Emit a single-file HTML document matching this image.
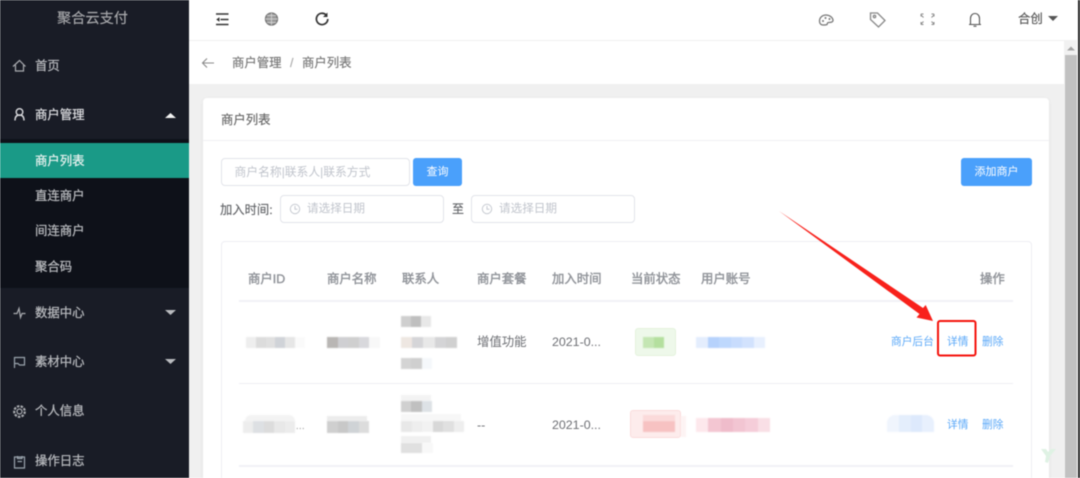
<!DOCTYPE html>
<html lang="zh"><head><meta charset="utf-8"><title>聚合云支付</title>
<style>
html,body{margin:0;padding:0;width:1080px;height:478px;overflow:hidden;background:#fff}
#r{position:relative;width:1080px;height:478px;overflow:hidden;background:#f0f0f0;font-family:"Liberation Sans","Noto Sans CJK SC",sans-serif;filter:blur(.4px)}
#r div,#r svg{position:absolute}
.t{line-height:20px;height:20px;white-space:nowrap;font-size:12.4px;-webkit-text-stroke:.15px currentColor}
.s{color:#b9bbbf;-webkit-text-stroke:.25px currentColor}
.h{color:#909399;font-size:12.4px;-webkit-text-stroke:.4px currentColor}
.c{color:#6c6e73;font-size:12.4px;-webkit-text-stroke:0}
.a{color:#5aa8f8;font-size:10.7px;-webkit-text-stroke:0}
.ph{color:#c0c4cc;font-size:12px;-webkit-text-stroke:0}
.in{background:#fff;border:1px solid #e2e4ea;border-radius:4px;box-sizing:border-box}
.btn{background:#4aa0fb;border-radius:3px;color:#fff;font-size:11px;text-align:center;-webkit-text-stroke:0}
.m{display:flex;filter:blur(.5px)}
.m i{display:block;flex:1}
.ln{left:239px;width:774px;background:#f1f1f6}
</style></head><body><div id="r">

<!-- sidebar -->
<div style="left:0;top:0;width:189px;height:478px;background:#191c26"></div>
<div style="left:0;top:139px;width:189px;height:149px;background:#0e1119"></div>
<div style="left:0;top:143px;width:189px;height:35px;background:#1a9a87"></div>
<div class="t" style="left:57px;top:9px;font-size:14.200px;color:#a8a9ac">聚合云支付</div>
<div class="t s" style="left:35px;top:55.500px">首页</div>
<div class="t s" style="left:35px;top:104.500px;color:#dcdde0">商户管理</div>
<div class="t" style="left:35px;top:151px;color:#e8f2ef;-webkit-text-stroke:.25px currentColor">商户列表</div>
<div class="t s" style="left:35px;top:186px">直连商户</div>
<div class="t s" style="left:35px;top:221px">间连商户</div>
<div class="t s" style="left:35px;top:257px">聚合码</div>
<div class="t s" style="left:35px;top:303px">数据中心</div>
<div class="t s" style="left:35px;top:352px">素材中心</div>
<div class="t s" style="left:35px;top:401px">个人信息</div>
<div class="t s" style="left:35px;top:451px">操作日志</div>
<svg style="left:0;top:0" width="189" height="478" fill="none" stroke="#a9abb0" stroke-width="1.2">
<path d="M13 66.500 19.500 60.500l6 6M15.500 65v6h8v-6"/>
<circle cx="19.500" cy="112" r="3.300" stroke="#d8d9dc" stroke-width="1.400"/>
<path d="M15 120.500c0-3.500 1.500-5.500 4.500-5.500s4.500 2 4.500 5.500" stroke="#d8d9dc" stroke-width="1.400"/>
<path d="M13.500 313.500h3.500l2-5 1.500 9 1.500-4h3.500"/>
<path d="M14.500 357v11M14.500 357.500h10v7.500h-5l-1.500-1.500h-3.500" stroke="#9aa4ad"/>
<circle cx="19.500" cy="411.500" r="2.500"/><circle cx="19.500" cy="411.500" r="5.300" stroke-width="2.200" stroke-dasharray="2.500 1.200"/>
<path d="M14.500 457h10v11h-10zM17.500 456v2.500h4.500V456M17.500 461.500h4.500" stroke="#9aa4ad"/>
<path d="M165 118l5.500-5 5.500 5z" fill="#f2f2f2" stroke="none"/>
<path d="M165 310l5.500 5 5.500-5z" fill="#b9bbbf" stroke="none"/>
<path d="M165 359l5.500 5 5.500-5z" fill="#b9bbbf" stroke="none"/>
</svg>

<!-- top bar -->
<div style="left:189px;top:0;width:891px;height:40px;background:#fff"></div>
<div style="left:189px;top:40px;width:875px;height:1px;background:#f0f0f0"></div>
<div style="left:189px;top:41px;width:875px;height:43px;background:#fff"></div>
<svg style="left:189px;top:0" width="891" height="40" fill="none" stroke="#555" stroke-width="1.300">
<path d="M27 14h12.500M31.500 19.500h8M27 24.500h12.500" stroke="#333" stroke-width="1.500"/><path d="M30.500 17.300l-3.300 2.200 3.300 2.200z" fill="#333" stroke="none"/>
<circle cx="82.500" cy="19" r="6" fill="#999" stroke="#777"/><path d="M76.500 19h12M82.500 13v12M78 15.500h9M78 22.500h9" stroke="#ddd" stroke-width=".7"/>
<path d="M137 14.800a5.700 5.700 0 1 0 1.800 4.200" stroke="#333" stroke-width="1.700"/><path d="M138.500 12.500v4.500H134z" fill="#333" stroke="none"/>
<path d="M634 25c-2 0-3.500-1.500-3.500-4 0-3.500 3-6 6.500-6s7 2.500 7 5.500c0 2-3 2-4.500 2-1.500 0-1 1.500-1.500 2s-2.500.5-4 .5z" stroke="#777"/><circle cx="634" cy="21" r="1" fill="#777" stroke="none"/><circle cx="636.500" cy="18" r="1" fill="#777" stroke="none"/><circle cx="640.500" cy="19" r="1" fill="#777" stroke="none"/>
<path d="M681.500 13h7l7.500 7.500-6.500 6.500-8-7.500z" stroke="#888"/><circle cx="685.500" cy="16.500" r="1.200" stroke="#888"/>
<path d="M732 15l2.500 2.500M745 15l-2.500 2.500M732 24l2.500-2.500M745 24l-2.500-2.500M732 14v2.500M732 14h2.500M745 14h-2.500M745 14v2.500M732 24.500h2.500M732 24.500V22M745 24.500h-2.500M745 24.500V22" stroke="#8a8a8a" stroke-width="1"/>
<path d="M781.500 24V18.500c0-3 2-5 4.500-5s4.500 2 4.500 5V24M780 24.500h12M784.500 26.200h3" stroke="#555" stroke-width="1.100"/>
<path d="M859 16l5 5 5-5z" fill="#555" stroke="none"/>
</svg>
<div class="t" style="left:1018px;top:9px;color:#555;font-size:12.400px">合创</div>

<!-- breadcrumb -->
<svg style="left:200px;top:55px" width="16" height="16" fill="none" stroke="#8a8a8a" stroke-width="1.100"><path d="M14 8H3M7 3.500 2.500 8 7 12.500"/></svg>
<div class="t" style="left:232px;top:53px;color:#777">商户管理</div>
<div class="t" style="left:290px;top:53px;color:#aaa">/</div>
<div class="t" style="left:302px;top:53px;color:#777">商户列表</div>

<!-- scrollbar -->
<div style="left:1064px;top:41px;width:14px;height:437px;background:#f1f1f1"></div>
<div style="left:1065px;top:55px;width:12px;height:423px;background:#c1c1c1"></div>
<div style="left:1077px;top:0;width:1px;height:478px;background:#fff"></div>
<div style="left:1078px;top:0;width:2px;height:478px;background:#222"></div>
<svg style="left:1066px;top:45px" width="10" height="7"><path d="M1 5.500 5 1.500l4 4z" fill="#a3a3a3"/></svg>

<!-- card -->
<div style="left:203px;top:98px;width:846px;height:390px;background:#fff;border-radius:4px;box-shadow:0 1px 4px rgba(0,0,0,.06)"></div>
<div style="left:203px;top:140px;width:846px;height:1px;background:#f0f0f3"></div>
<div class="t" style="left:221px;top:110px;color:#666;font-size:12.400px">商户列表</div>

<div class="in" style="left:221px;top:158px;width:189px;height:28px"></div>
<div class="t ph" style="left:234.500px;top:162px;font-size:11.800px">商户名称|联系人|联系方式</div>
<div class="btn t" style="left:413px;top:158px;width:49px;height:28px;line-height:28px">查询</div>
<div class="btn t" style="left:961px;top:158px;width:71px;height:28px;line-height:28px">添加商户</div>

<div class="t" style="left:220px;top:200px;color:#606266;font-size:12.300px">加入时间:</div>
<div class="in" style="left:280px;top:195px;width:164px;height:28px"></div>
<div class="t ph" style="left:307px;top:199px;font-size:11.600px">请选择日期</div>
<div class="t" style="left:452px;top:199px;color:#606266;font-size:12px">至</div>
<div class="in" style="left:471px;top:195px;width:164px;height:28px"></div>
<div class="t ph" style="left:499px;top:199px;font-size:11.600px">请选择日期</div>
<svg style="left:288px;top:202px" width="14" height="14" fill="none" stroke="#c6cad1" stroke-width="1"><circle cx="7" cy="7" r="4.700"/><path d="M7 4v3.200h2.500"/></svg>
<svg style="left:480px;top:202px" width="14" height="14" fill="none" stroke="#c6cad1" stroke-width="1"><circle cx="7" cy="7" r="4.700"/><path d="M7 4v3.200h2.500"/></svg>

<!-- table box -->
<div style="left:221px;top:241px;width:811px;height:260px;border:1px solid #eeeef3;border-radius:4px;box-sizing:border-box"></div>
<div class="t h" style="left:248px;top:269px">商户ID</div>
<div class="t h" style="left:327px;top:269px">商户名称</div>
<div class="t h" style="left:402px;top:269px">联系人</div>
<div class="t h" style="left:477px;top:269px">商户套餐</div>
<div class="t h" style="left:552px;top:269px">加入时间</div>
<div class="t h" style="left:631px;top:269px">当前状态</div>
<div class="t h" style="left:701px;top:269px">用户账号</div>
<div class="t h" style="left:980px;top:269px">操作</div>
<div class="ln" style="top:300px;height:2px"></div>
<div class="ln" style="top:383px;height:1px;background:#eeeef3"></div>
<div class="ln" style="top:465px;height:2px"></div>

<div class="t c" style="left:477px;top:332px">增值功能</div>
<div class="t c" style="left:477px;top:415px">--</div>
<div class="t c" style="left:552px;top:332px;font-size:12.400px">2021-0...</div>
<div class="t c" style="left:552px;top:415px;font-size:12.400px">2021-0...</div>
<div class="t" style="left:296px;top:416px;color:#aaa;font-size:9px;letter-spacing:.5px">...</div>

<div class="t a" style="left:891px;top:332px">商户后台</div>
<div class="t a" style="left:947px;top:332px">详情</div>
<div class="t a" style="left:982px;top:332px">删除</div>
<div class="t a" style="left:947px;top:415px">详情</div>
<div class="t a" style="left:982px;top:415px">删除</div>

<!-- mosaics row 1 -->
<div class="m" style="left:246px;top:337px;width:59px;height:11px"><i style="background:#eee"></i><i style="background:#dcdcdc"></i><i style="background:#e0e0e0"></i><i style="background:#d0d3d8"></i><i style="background:#e6e6e6"></i><i style="background:#fafafa"></i></div>
<div class="m" style="left:327px;top:337px;width:53px;height:11px"><i style="background:#b9b6b4"></i><i style="background:#cfcfd2"></i><i style="background:#cfcfcf"></i><i style="background:#d8d8dc"></i><i style="background:#f8f8f8"></i></div>
<div class="m" style="left:401px;top:316px;width:30px;height:11px"><i style="background:#cfcfcf"></i><i style="background:#bfbfbf"></i><i style="background:#e8e8e8"></i></div>
<div class="m" style="left:401px;top:337px;width:56px;height:11px"><i style="background:#eee7e2"></i><i style="background:#d5d5d8"></i><i style="background:#e8e8e8"></i><i style="background:#d4d4d6"></i><i style="background:#d0d0d0"></i></div>
<div class="m" style="left:401px;top:358px;width:31px;height:11px"><i style="background:#d4d4d4"></i><i style="background:#cfcfcf"></i><i style="background:#f5f8fb"></i></div>
<div style="left:635px;top:328px;width:41px;height:28px;background:#eef8ea;border:1px solid #e4f3dd;border-radius:3px;box-sizing:border-box"></div>
<div class="m" style="left:643px;top:337px;width:21px;height:11px"><i style="background:#c4e6b3"></i><i style="background:#b4df9e"></i></div>
<div class="m" style="left:696px;top:337px;width:69px;height:11px"><i style="background:#e4edfd"></i><i style="background:#b6d2fc"></i><i style="background:#bed8fd"></i><i style="background:#c8dcfd"></i><i style="background:#d2e2fd"></i><i style="background:#e8f0fe"></i></div>

<!-- mosaics row 2 -->
<div class="m" style="left:245px;top:415px;width:50px;height:6px;background:#f3f3f3;border-radius:6px 6px 0 0"></div>
<div class="m" style="left:243px;top:421px;width:52px;height:12px"><i style="background:#ededed"></i><i style="background:#dde0e3"></i><i style="background:#dcdcdc"></i><i style="background:#e8e8e8"></i><i style="background:#ececec"></i></div>
<div class="m" style="left:327px;top:416px;width:40px;height:5px;background:#ececec"></div>
<div class="m" style="left:327px;top:421px;width:42px;height:12px"><i style="background:#cfcfcf"></i><i style="background:#c8c8c8"></i><i style="background:#cfd3d6"></i><i style="background:#dcdcdc"></i></div>
<div class="m" style="left:401px;top:395px;width:30px;height:6px;background:#f3f3f3"></div>
<div class="m" style="left:401px;top:401px;width:31px;height:11px"><i style="background:#d0d0d0"></i><i style="background:#c0c0c0"></i><i style="background:#dde2e6"></i></div>
<div class="m" style="left:401px;top:414px;width:60px;height:7px;background:#f7f7f7"></div>
<div class="m" style="left:401px;top:421px;width:63px;height:11px"><i style="background:#e8e8e8"></i><i style="background:#eee"></i><i style="background:#f2f2f2"></i><i style="background:#d8d8d8"></i><i style="background:#e0e0e0"></i><i style="background:#eee"></i></div>
<div class="m" style="left:401px;top:436px;width:30px;height:7px;background:#f0f0f0"></div>
<div class="m" style="left:401px;top:443px;width:32px;height:10px"><i style="background:#e0e0e0"></i><i style="background:#e0e0e0"></i><i style="background:#f8f8f8"></i></div>
<div style="left:630px;top:410px;width:51px;height:28px;background:#fdecec;border:1px solid #fbdcdc;border-radius:3px;box-sizing:border-box"></div>
<div class="m" style="left:681px;top:416px;width:5px;height:21px;background:#fdf3f3"></div>
<div class="m" style="left:643px;top:415px;width:32px;height:6px;background:#fbdada"></div>
<div class="m" style="left:643px;top:421px;width:32px;height:11px;background:#f7c2c2"></div>
<div class="m" style="left:696px;top:418px;width:74px;height:14px"><i style="background:#fde8ec"></i><i style="background:#f3c6d2"></i><i style="background:#efbccb"></i><i style="background:#f2c5d2"></i><i style="background:#f5cdd9"></i><i style="background:#f9dfe6"></i></div>
<div class="m" style="left:887px;top:415px;width:47px;height:17px;border-radius:8px 8px 0 0;overflow:hidden"><i style="background:#f0f5fd"></i><i style="background:#e4eefc"></i><i style="background:#dde9fc"></i><i style="background:#e8f0fd"></i></div>

<!-- annotation -->
<svg style="left:0;top:0" width="1080" height="478">
<path d="M779 211 923 308 925.700 305 933 321 916.500 317.500 919.500 314z" fill="#f8211b"/>
<rect x="938" y="321" width="37.500" height="34.500" rx="2" fill="none" stroke="#f4120c" stroke-width="2"/>
<path d="M1041 449h5l2 3 3-3h5l-6 7-2 7-3-1 1-6z" fill="#dff2e4"/>
</svg>

</div></body></html>
